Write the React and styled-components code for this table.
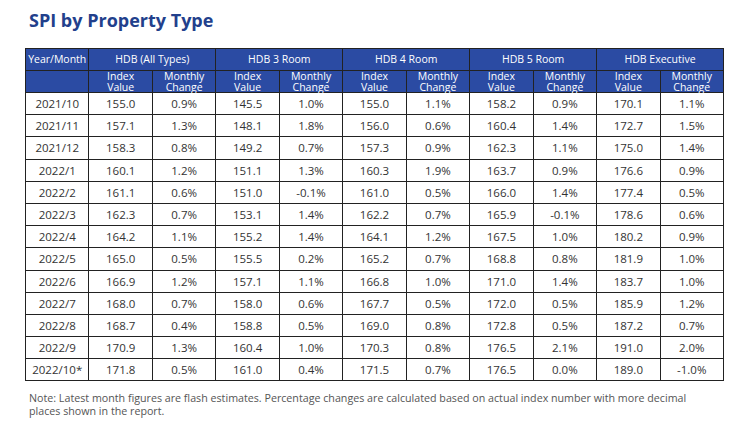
import React from 'react';
import styled, { createGlobalStyle } from 'styled-components';

const GlobalStyle = createGlobalStyle`
  body {
    margin: 0;
    background: #ffffff;
    font-family: 'Open Sans', 'Liberation Sans', Arial, sans-serif;
  }
`;

const Page = styled.div`
  width: 750px;
  height: 429px;
  padding: 8px 26px 0 25px;
  box-sizing: border-box;
`;

const Title = styled.h1`
  margin: 0 0 0 4px;
  font-size: 18px;
  line-height: 25px;
  font-weight: 700;
  color: #22408c;
`;

const Table = styled.table`
  margin-top: 15px;
  width: 699px;
  border-collapse: collapse;
  table-layout: fixed;
  border: 1.5px solid #222;
`;

const HeadCell = styled.th`
  background: #2b4ba3;
  color: #ffffff;
  font-weight: 400;
  font-size: 10.5px;
  line-height: 10.5px;
  height: 21px;
  padding: 0;
  border: 1.5px solid #222;
  text-align: center;
  vertical-align: middle;
`;

const Cell = styled.td`
  font-size: 11.5px;
  color: #333;
  text-align: center;
  height: 21.2px;
  padding: 0;
  border: 1.5px solid #222;
`;

const Note = styled.p`
  margin: 11px 0 0 4px;
  font-size: 10.7px;
  line-height: 13px;
  color: #555;
  width: 680px;
`;

const groups = ['HDB (All Types)', 'HDB 3 Room', 'HDB 4 Room', 'HDB 5 Room', 'HDB Executive'];

const rows = [
  ['2021/10', '155.0', '0.9%', '145.5', '1.0%', '155.0', '1.1%', '158.2', '0.9%', '170.1', '1.1%'],
  ['2021/11', '157.1', '1.3%', '148.1', '1.8%', '156.0', '0.6%', '160.4', '1.4%', '172.7', '1.5%'],
  ['2021/12', '158.3', '0.8%', '149.2', '0.7%', '157.3', '0.9%', '162.3', '1.1%', '175.0', '1.4%'],
  ['2022/1', '160.1', '1.2%', '151.1', '1.3%', '160.3', '1.9%', '163.7', '0.9%', '176.6', '0.9%'],
  ['2022/2', '161.1', '0.6%', '151.0', '-0.1%', '161.0', '0.5%', '166.0', '1.4%', '177.4', '0.5%'],
  ['2022/3', '162.3', '0.7%', '153.1', '1.4%', '162.2', '0.7%', '165.9', '-0.1%', '178.6', '0.6%'],
  ['2022/4', '164.2', '1.1%', '155.2', '1.4%', '164.1', '1.2%', '167.5', '1.0%', '180.2', '0.9%'],
  ['2022/5', '165.0', '0.5%', '155.5', '0.2%', '165.2', '0.7%', '168.8', '0.8%', '181.9', '1.0%'],
  ['2022/6', '166.9', '1.2%', '157.1', '1.1%', '166.8', '1.0%', '171.0', '1.4%', '183.7', '1.0%'],
  ['2022/7', '168.0', '0.7%', '158.0', '0.6%', '167.7', '0.5%', '172.0', '0.5%', '185.9', '1.2%'],
  ['2022/8', '168.7', '0.4%', '158.8', '0.5%', '169.0', '0.8%', '172.8', '0.5%', '187.2', '0.7%'],
  ['2022/9', '170.9', '1.3%', '160.4', '1.0%', '170.3', '0.8%', '176.5', '2.1%', '191.0', '2.0%'],
  ['2022/10*', '171.8', '0.5%', '161.0', '0.4%', '171.5', '0.7%', '176.5', '0.0%', '189.0', '-1.0%'],
];

const App = () => {
  return (
    <>
      <GlobalStyle />
      <Page>
        <Title>SPI by Property Type</Title>
        <Table>
          <thead>
            <tr>
              <HeadCell>Year/Month</HeadCell>
              {groups.map((g) => (
                <HeadCell key={g} colSpan={2}>
                  {g}
                </HeadCell>
              ))}
            </tr>
            <tr>
              <HeadCell />
              {groups.map((g) => (
                <React.Fragment key={g}>
                  <HeadCell>
                    Index
                    <br />
                    Value
                  </HeadCell>
                  <HeadCell>
                    Monthly
                    <br />
                    Change
                  </HeadCell>
                </React.Fragment>
              ))}
            </tr>
          </thead>
          <tbody>
            {rows.map((r) => (
              <tr key={r[0]}>
                {r.map((v, i) => (
                  <Cell key={i}>{v}</Cell>
                ))}
              </tr>
            ))}
          </tbody>
        </Table>
        <Note>
          Note: Latest month figures are flash estimates. Percentage changes are calculated based on actual index
          number with more decimal places shown in the report.
        </Note>
      </Page>
    </>
  );
};

export default App;
